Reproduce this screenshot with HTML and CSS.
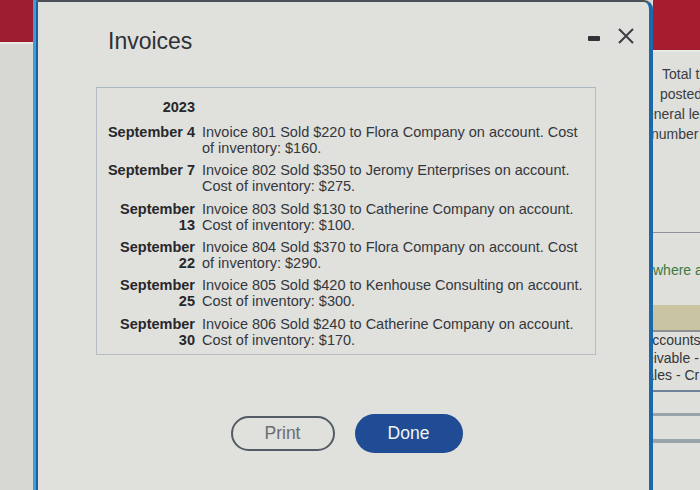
FILE: index.html
```html
<!DOCTYPE html>
<html>
<head>
<meta charset="utf-8">
<link rel="stylesheet" href="styles.css">
</head>
<body>
<div class="screen">
  <div class="left-strip">
    <div class="red-bar"></div>
  </div>
  <div class="dialog">
    <div class="dialog-head">
      <h1 class="title">Invoices</h1>
      <div class="controls">
        <span class="minimize"></span>
        <svg class="close" width="18" height="18" viewBox="0 0 18 18"><path d="M2 2 L16 16 M16 2 L2 16" stroke="#3a3d42" stroke-width="2" fill="none"/></svg>
      </div>
    </div>
    <div class="invoice-box">
      <div class="invoice-grid">
        <div class="date year">2023</div><div class="desc year"></div>
        <div class="date">September 4</div><div class="desc">Invoice 801 Sold $220 to Flora Company on account. Cost of inventory: $160.</div>
        <div class="date">September 7</div><div class="desc">Invoice 802 Sold $350 to Jeromy Enterprises on account. Cost of inventory: $275.</div>
        <div class="date">September 13</div><div class="desc">Invoice 803 Sold $130 to Catherine Company on account. Cost of inventory: $100.</div>
        <div class="date">September 22</div><div class="desc">Invoice 804 Sold $370 to Flora Company on account. Cost of inventory: $290.</div>
        <div class="date">September 25</div><div class="desc">Invoice 805 Sold $420 to Kenhouse Consulting on account. Cost of inventory: $300.</div>
        <div class="date">September 30</div><div class="desc">Invoice 806 Sold $240 to Catherine Company on account. Cost of inventory: $170.</div>
      </div>
    </div>
    <div class="buttons">
      <button class="btn btn-print">Print</button>
      <button class="btn btn-done">Done</button>
    </div>
  </div>
  <div class="right-page">
    <div class="red-top"></div>
    <div class="page-text">
      <div class="pl l1">Total the</div>
      <div class="pl l2">posted</div>
      <div class="pl l3">General ledger</div>
      <div class="pl l4">number</div>
    </div>
    <div class="hr hr1"></div>
    <div class="green-text">where a</div>
    <div class="khaki"></div>
    <div class="acct-lines">
      <div class="al a1">Accounts</div>
      <div class="al a2">Receivable -</div>
      <div class="al a3">Sales - Cr</div>
    </div>
    <div class="hr hr2"></div>
    <div class="hr hr3"></div>
    <div class="hr hr4"></div>
  </div>
</div>
</body>
</html>
```
FILE: styles.css
```css
* { box-sizing: border-box; }
html, body { margin: 0; padding: 0; }
body {
  width: 700px;
  height: 490px;
  overflow: hidden;
  font-family: "Liberation Sans", Arial, sans-serif;
  background: #dcdcd8;
}
.screen {
  display: flex;
  width: 700px;
  height: 490px;
}
.left-strip {
  width: 36px;
  flex: none;
  background: #d7d7d3;
  border-right: 3px solid #3aa0dc;
}
.red-bar {
  height: 44px;
  background: #9d1c2e;
  border-bottom: 2px solid #e8e8e4;
}
.dialog {
  width: 617px;
  flex: none;
  background: #e0e0dc;
  border-left: 2px solid #1f5f9e;
  border-right: 4px solid #1d68aa;
  border-top: 2px solid #4b5057;
  border-top-right-radius: 9px;
  display: flex;
  flex-direction: column;
}
.dialog-head {
  display: flex;
  align-items: flex-start;
  justify-content: space-between;
  padding: 25px 14px 0 70px;
  height: 85px;
}
.title {
  margin: 0;
  font-weight: normal;
  font-size: 23px;
  line-height: 28px;
  color: #2e3135;
}
.controls {
  display: flex;
  align-items: center;
  gap: 17px;
}
.minimize {
  display: block;
  width: 12px;
  height: 5px;
  background: #2f3236;
  border-radius: 1px;
  margin-top: 4px;
}
.close { display: block; }
.invoice-box {
  margin-left: 58px;
  width: 500px;
  height: 268px;
  border: 1px solid #b8bec6;
  border-top-color: #a9b6c4;
  padding: 11px 0 0 8px;
}
.invoice-grid {
  display: grid;
  grid-template-columns: 90px 386px;
  column-gap: 7px;
  row-gap: 6.4px;
  font-size: 14.5px;
  line-height: 16px;
  color: #34373c;
}
.date {
  text-align: right;
  font-weight: bold;
  color: #26282b;
}
.year { margin-bottom: 2.5px; }
.buttons {
  display: flex;
  justify-content: center;
  align-items: center;
  gap: 20px;
  margin-top: 59px;
  padding-left: 6px;
}
.btn {
  font-family: "Liberation Sans", Arial, sans-serif;
  font-size: 17.5px;
  border-radius: 20px;
  padding: 0;
}
.btn-print {
  width: 104px;
  height: 35px;
  border: 2px solid #535b65;
  background: transparent;
  color: #6a6d72;
}
.btn-done {
  width: 108px;
  height: 39px;
  border: none;
  background: #1f4c94;
  color: #f2f4f8;
}
.right-page {
  flex: 1;
  overflow: hidden;
  background: #dfdfdb;
  font-size: 14px;
  color: #3a3d42;
  white-space: nowrap;
}
.red-top {
  height: 52px;
  background: #a51d2e;
  border-bottom: 2px solid #eaeae6;
}
.page-text { padding-top: 12px; }
.pl { line-height: 20px; }
.l1 { margin-left: 9px; }
.l2 { margin-left: 7px; }
.l3 { margin-left: -18px; }
.l4 { margin-left: -2px; }
.hr { height: 1px; background: #8e9296; }
.hr1 { margin-top: 88px; }
.green-text {
  margin-top: 29px;
  margin-left: 0;
  color: #3c7a40;
  line-height: 16px;
}
.khaki {
  margin-top: 27px;
  height: 27px;
  background: #c9c5a2;
  border-bottom: 2px solid #8c9094;
}
.al { line-height: 17.5px; color: #33363a; }
.a1 { margin-left: -10px; }
.a2 { margin-left: -32px; }
.a3 { margin-left: -16px; }
.hr2 { margin-top: 5px; height: 2px; background: #6f8498; }
.hr3 { margin-top: 21px; height: 3px; background: #9aa2aa; }
.hr4 { margin-top: 23px; height: 4px; background: #9aa2aa; }
```
